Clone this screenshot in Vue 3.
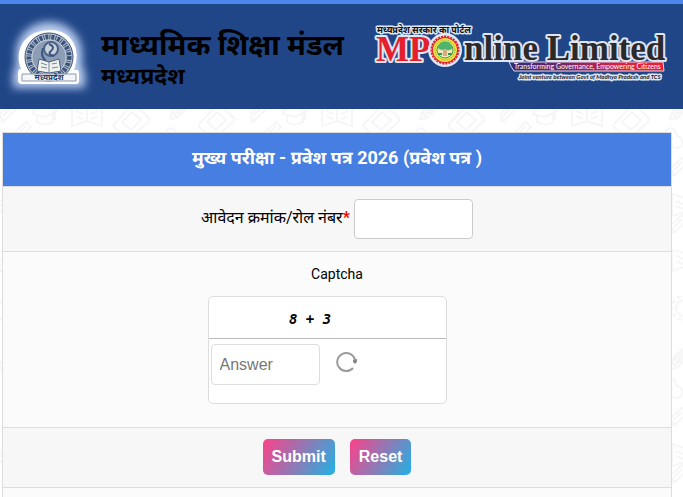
<template>
  <div class="page">
    <svg class="doodles" aria-hidden="true">
      <defs>
        <g id="cap">
          <path d="M-12 0v-3l12-5 12 5-12 6zM-8 0v8q8 5 16 0v-8M10-2v8" />
        </g>
        <g id="book">
          <path d="M-15-10l15 5 15-5v22l-15-5-15 5zM0-5v12M-11-3l7 3M-11 2l7 3M11-3l-7 3M11 2l-7 3" />
        </g>
        <g id="box">
          <path d="M-17 3l17-18q3-2 6 1l11 10q2 3 0 5l-18 16q-2 2-5-1l-11-10q-1-1 0-3zM-9 1l10-10 9 8-10 10z" />
        </g>
        <g id="pencil">
          <path d="M-8 8l2-7 12-11 5 5-12 12zM-6 1l5 6M-2 2l8-8" />
        </g>
        <g id="key">
          <path d="M-8-8q5-4 8 1l2 5a6 6 0 1 1-5 2l-5-5q-2-1 0-3z" />
        </g>
        <g id="gear">
          <circle r="12" stroke-dasharray="4 3" stroke-width="3" />
          <circle r="8" />
        </g>
        <pattern id="tile" width="250" height="250" patternUnits="userSpaceOnUse">
          <use
            v-for="(item, index) in doodles"
            :key="index"
            :href="'#' + item.shape"
            :x="item.x"
            :y="item.y"
          />
        </pattern>
      </defs>
      <rect width="100%" height="100%" stroke="none" fill="url(#tile)" />
    </svg>

    <header class="header">
      <svg class="emblem" viewBox="0 0 80 80" role="img" aria-label="Board emblem">
        <defs>
          <filter id="glow" x="-30%" y="-30%" width="160%" height="160%">
            <feGaussianBlur stdDeviation="4" />
          </filter>
        </defs>
        <path class="halo" filter="url(#glow)" d="M8 52V37a33 31 0 0 1 66 0v15l3 3v17H5V55z" />
        <path fill="#fff" d="M13 53a28 28 0 0 1 3-28Q25 14 42 14q16 0 23 12 7 12 1 28h3q2 0 2 3v8q0 3-3 3H14q-4 0-4-4v-7q0-4 3-4z" />
        <circle cx="41" cy="41" r="24" fill="#b4bfce" stroke="#3e5475" stroke-width="1" />
        <circle cx="41" cy="41" r="20" fill="none" stroke="#3b547b" stroke-width="5" stroke-dasharray="3 1 1 1" />
        <circle cx="41" cy="41" r="17" fill="#8c9db5" stroke="#c3cdd9" />
        <circle cx="43" cy="33" r="7" fill="#c9d1dc" stroke="#4a6187" stroke-width="2" />
        <path d="M41 28q7 3 2 7-4 3 3 5M35 32q-3 8 3 13" fill="none" stroke="#3b547b" stroke-width="2" />
        <path d="M31 43l10 3 10-3 2 12-12 2-12-2z" fill="#eef1ec" stroke="#4a6187" />
        <path d="M41 46v11M33 47l6 2M33 51l6 1M44 48l5-1M44 52l6-1" stroke="#77869b" fill="none" />
        <path d="M14 58h54v7H14z" fill="#f4f5f6" stroke="#8d99ad" />
        <text class="emblem-name" x="41" y="64">मध्यप्रदेश</text>
      </svg>
      <div class="board">
        <div class="board-name">माध्यमिक शिक्षा मंडल</div>
        <div class="board-state">मध्यप्रदेश</div>
      </div>
      <svg class="portal" viewBox="0 0 300 66" role="img" aria-label="MPOnline Limited">
        <defs>
          <linearGradient id="ribbon">
            <stop offset="0" stop-color="#31297a" />
            <stop offset="0.350" stop-color="#722764" />
            <stop offset="0.700" stop-color="#d62246" />
            <stop offset="1" stop-color="#ed1c2e" />
          </linearGradient>
        </defs>
        <text class="outlined portal-mp" x="5" y="45">MP</text>
        <text class="outlined portal-name" x="93" y="44">nline Limited</text>
        <text class="outlined portal-hindi" x="6" y="17">मध्यप्रदेश सरकार का पोर्टल</text>
        <text class="outlined portal-venture" x="148" y="63">Joint venture between Govt of Madhya Pradesh and TCS</text>
        <path d="M138 46h154l1 9H143q-3-4-5-9z" fill="url(#ribbon)" stroke="#d7dcef" />
        <text class="portal-motto" x="143" y="53">Transforming Governance, Empowering Citizens</text>
        <circle cx="74" cy="34" r="17" fill="#dfe5f2" />
        <circle cx="74" cy="34" r="13" fill="#e51f2b" stroke="#e51f2b" stroke-width="3" stroke-dasharray="2 1" />
        <circle cx="74" cy="34" r="12" fill="#f4e33f" />
        <circle cx="74" cy="34" r="10" fill="none" stroke="#73a348" stroke-dasharray="1 1" />
        <circle cx="74" cy="34" r="8" fill="#eee8bd" stroke="#479b47" stroke-width="1" />
        <path d="M68 33q-3-3 1-5 1-3 5-2 5-1 6 3 3 3-1 5-3 1-5-1-3 2-6 0z" fill="#4fb56d" />
        <path d="M72 33h4v7h-4z" fill="#d5ac81" />
        <path d="M67 38h4M77 38h4" stroke="#249b51" stroke-width="2" />
      </svg>
    </header>

    <form class="panel" @submit.prevent @reset="resetForm">
      <h1 class="panel-title">मुख्य परीक्षा - प्रवेश पत्र 2026 (प्रवेश पत्र )</h1>
      <div class="row roll-row">
        <label for="roll">आवेदन क्रमांक/रोल नंबर<span class="required">*</span></label>
        <input id="roll" v-model="rollNumber" class="field" type="text" />
      </div>
      <div class="row captcha-row">
        <label class="captcha-label" for="answer">Captcha</label>
        <div class="captcha">
          <div class="question">{{ first }} + {{ second }}</div>
          <div class="answer-line">
            <input id="answer" v-model="answer" class="field answer" type="text" placeholder="Answer" />
            <button class="refresh" type="button" aria-label="Refresh captcha" @click="refreshCaptcha">
              <svg viewBox="0 0 22 22">
                <path d="M17 17A9 9 0 1 1 19 9" fill="none" stroke="#999b9d" stroke-width="2" />
                <path d="M17 9l4-1v3l-2 2-2-2z" fill="#85888b" />
              </svg>
            </button>
          </div>
        </div>
      </div>
      <div class="row action-row">
        <button class="action" type="submit">Submit</button>
        <button class="action" type="reset">Reset</button>
      </div>
      <div class="row last-row"></div>
    </form>
  </div>
</template>

<script setup>
import { ref } from 'vue'

const rollNumber = ref('')
const answer = ref('')
const first = ref(8)
const second = ref(3)

// background pattern, positions inside one 250px tile
const doodles = [
  { shape: 'cap', x: 45, y: 114 },
  { shape: 'book', x: 87, y: 114 },
  { shape: 'box', x: 131, y: 121 },
  { shape: 'pencil', x: 178, y: 111 },
  { shape: 'box', x: 216, y: 121 },
  { shape: 'pencil', x: 5, y: 114 },
  { shape: 'pencil', x: 20, y: 132 },
  { shape: 'key', x: 175, y: 138 },
  { shape: 'pencil', x: 176, y: 168 },
  { shape: 'book', x: 187, y: 204 },
  { shape: 'pencil', x: 176, y: 225 },
  { shape: 'book', x: 187, y: 9 },
  { shape: 'gear', x: 184, y: 58 },
  { shape: 'pencil', x: 180, y: 106 },
  { shape: 'pencil', x: 2, y: 14 },
  { shape: 'key', x: 2, y: 60 },
  { shape: 'pencil', x: 1, y: 205 }
]

function refreshCaptcha() {
  first.value = Math.floor(Math.random() * 9) + 1
  second.value = Math.floor(Math.random() * 9) + 1
  answer.value = ''
}

function resetForm() {
  rollNumber.value = ''
  answer.value = ''
}
</script>

<style>
body {
  margin: 0;
  overflow: hidden;
  background: #fff;
}
</style>

<style scoped>
.page {
  position: relative;
  height: 100vh;
  overflow: hidden;
  font-family: Roboto, "Noto Sans Devanagari", "Noto Sans", sans-serif;
  color: #000;
}

.doodles {
  position: absolute;
  inset: 0;
  z-index: -1;
  width: 100%;
  height: 100%;
  fill: none;
  stroke: #f6f6f6;
  stroke-width: 2;
}

.header {
  display: flex;
  align-items: flex-start;
  box-sizing: border-box;
  height: 109px;
  padding: 12px 12px 0 8px;
  border-top: 4px solid #4c87ec;
  background: #204687;
}

.emblem {
  flex: none;
  width: 80px;
  height: 80px;
  overflow: visible;
}

.halo {
  fill: #b9cdf0;
}

.emblem-name {
  font-size: 8px;
  font-weight: bold;
  text-anchor: middle;
  fill: #263f68;
}

.board {
  flex: 1;
  padding: 11px 0 0 13px;
  font-weight: bold;
  white-space: nowrap;
}

.board-name {
  font-size: 29px;
  line-height: 36px;
}

.board-state {
  font-size: 23px;
  line-height: 28px;
}

.portal {
  flex: none;
  width: 300px;
  height: 66px;
  overflow: visible;
}

.outlined {
  paint-order: stroke;
  stroke: #dfe5f2;
  stroke-width: 4px;
  stroke-linejoin: round;
}

.portal-hindi {
  font-size: 9px;
  font-weight: bold;
  fill: #111;
  stroke-width: 3px;
}

.portal-mp,
.portal-name {
  font-family: "Liberation Serif", serif;
  font-size: 35px;
  font-weight: bold;
}

.portal-mp {
  fill: #e51f2b;
}

.portal-name {
  fill: #2b2a2a;
}

.portal-motto {
  font-family: Lato, sans-serif;
  font-size: 7px;
  fill: #fff;
}

.portal-venture {
  font-family: Lato, sans-serif;
  font-size: 6px;
  font-style: italic;
  font-weight: bold;
  fill: #222;
  stroke-width: 3px;
}

.panel {
  margin: 23px 11px 0 2px;
  border: 1px solid #ddd;
}

.panel-title {
  margin: 0;
  padding-bottom: 4px;
  font-size: 18px;
  line-height: 49px;
  text-align: center;
  white-space: nowrap;
  color: #fff;
  background: #477ee1;
}

.row {
  border-top: 1px solid #ddd;
  background: #fbfbfb;
}

.roll-row,
.action-row {
  display: flex;
  align-items: center;
  justify-content: center;
  background: #f7f7f7;
}

.roll-row {
  gap: 4px;
  height: 64px;
  font-size: 16px;
}

.required {
  font-weight: bold;
  color: #f00;
}

.field {
  box-sizing: border-box;
  width: 119px;
  height: 40px;
  padding: 0 8px;
  border: 1px solid #ccc;
  border-radius: 4px;
  background: #fff;
  font-family: "Liberation Sans", sans-serif;
  font-size: 16px;
}

.captcha-row {
  display: flex;
  flex-direction: column;
  align-items: center;
  box-sizing: border-box;
  height: 176px;
  padding-top: 12px;
}

.captcha-label {
  font-size: 14px;
  line-height: 20px;
}

.captcha {
  box-sizing: border-box;
  width: 239px;
  height: 108px;
  margin: 12px 20px 0 0;
  border: 1px solid #ddd;
  border-radius: 5px;
  background: #fff;
}

.question {
  padding: 3px 34px 0 0;
  border-bottom: 1px solid #bbb;
  font-family: "DejaVu Sans Mono", monospace;
  font-size: 14px;
  font-style: italic;
  font-weight: bold;
  line-height: 38px;
  text-align: center;
}

.answer-line {
  display: flex;
  align-items: flex-start;
  gap: 16px;
  padding: 5px 2px;
}

.answer {
  width: 109px;
  height: 41px;
  border-color: #ddd;
}

.answer::placeholder {
  color: #777;
  opacity: 1;
}

.refresh {
  width: 22px;
  height: 22px;
  margin-top: 7px;
  padding: 0;
  border: 0;
  background: none;
  cursor: pointer;
}

.refresh svg {
  display: block;
  width: 22px;
  height: 22px;
}

.action-row {
  align-items: flex-start;
  gap: 15px;
  box-sizing: border-box;
  height: 60px;
  padding-top: 11px;
}

.action {
  height: 36px;
  padding: 0 9px;
  border: 0;
  border-radius: 5px;
  background: linear-gradient(120deg, #ff4088, #20b2e3);
  font-family: "Liberation Sans", sans-serif;
  font-size: 16px;
  font-weight: bold;
  color: #fff;
  cursor: pointer;
}

.last-row {
  height: 60px;
}
</style>
